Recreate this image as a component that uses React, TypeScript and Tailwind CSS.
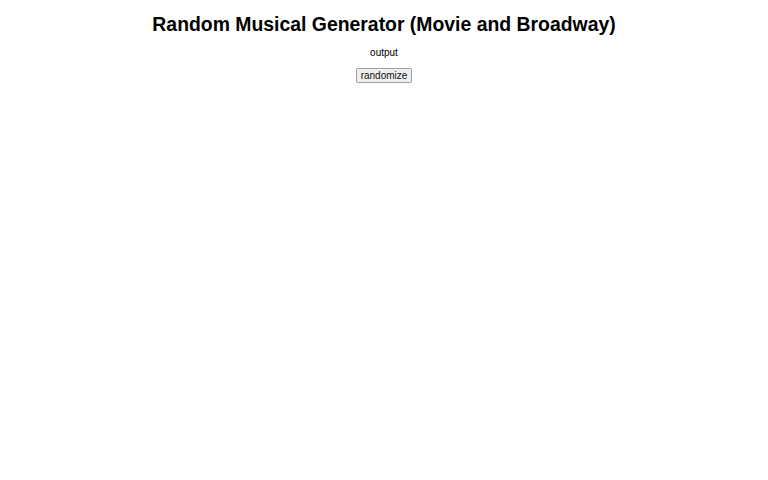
export default function App() {
  return (
    <div className="flex flex-col items-center font-['Liberation_Sans',Arial,sans-serif] text-black bg-white min-h-screen">
      <h1 className="mt-[12px] text-[19.4px] font-bold leading-6">Random Musical Generator (Movie and Broadway)</h1>
      <p className="mt-[11px] text-[10px] leading-[12px]">output</p>
      <button className="mt-[9px] px-[4px] h-[15px] text-[10px] leading-[12px] text-[#111] bg-[#efefef] border border-[#a0a0a0] rounded-[2px]">
        randomize
      </button>
    </div>
  );
}
